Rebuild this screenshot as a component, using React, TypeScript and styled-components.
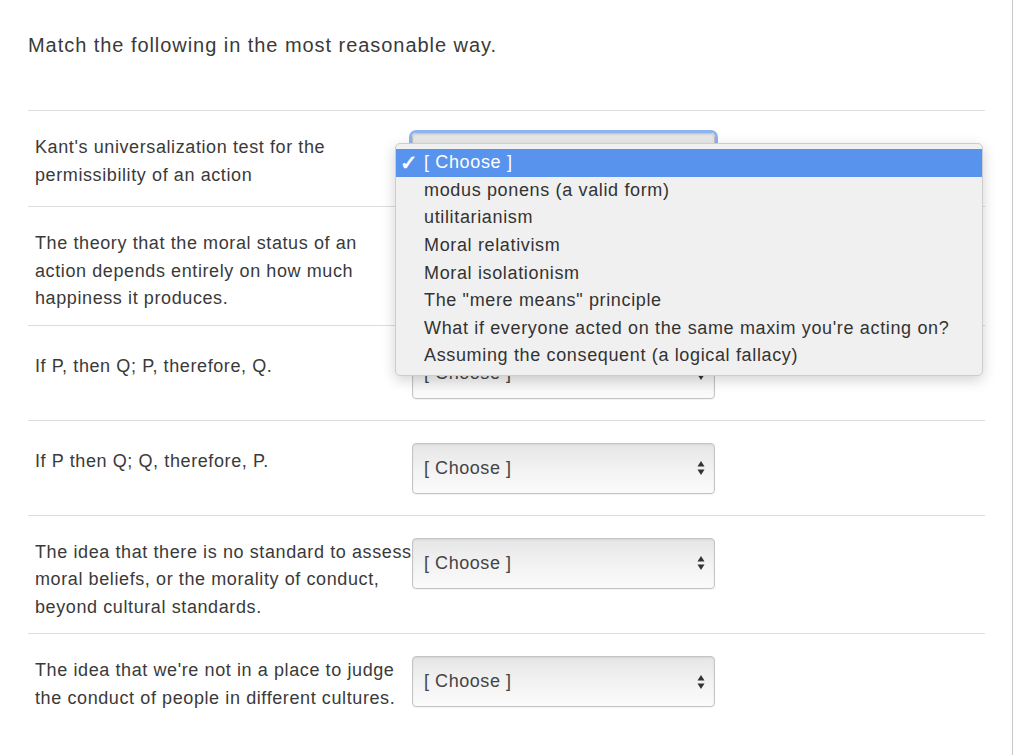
import styled, { createGlobalStyle } from "styled-components";

const GlobalStyle = createGlobalStyle`
  html, body {
    margin: 0;
    padding: 0;
    background: #fff;
  }
  body {
    font-family: "Liberation Sans", Arial, Helvetica, sans-serif;
    color: #3a3a3a;
  }
`;

const Page = styled.div`
  width: 1013px;
  min-height: 755px;
  box-sizing: border-box;
  border-right: 1px solid #c9c9c9;
  padding: 33px 0 0 28px;
`;

const Title = styled.h1`
  margin: 0;
  font-size: 20px;
  font-weight: normal;
  line-height: 24px;
  letter-spacing: 0.95px;
  color: #3a3a3a;
`;

const List = styled.div`
  width: 957px;
  margin-top: 53px;
  border-top: 1px solid #dcdcdc;
`;

const Row = styled.div<{ $last?: boolean }>`
  display: flex;
  align-items: flex-start;
  padding: 22px 0 12px 7px;
  border-bottom: ${(p) => (p.$last ? "none" : "1px solid #dcdcdc")};
`;

const Label = styled.div<{ $single?: boolean }>`
  width: 377px;
  flex: none;
  font-size: 18px;
  letter-spacing: 0.6px;
  line-height: 27.5px;
  padding-top: ${(p) => (p.$single ? "5px" : "1px")};
  color: #3a3a3a;
  white-space: nowrap;
`;

const SelectWrap = styled.div<{ $open?: boolean }>`
  position: relative;
  margin-bottom: ${(p) => (p.$open ? "10px" : "9px")};
`;

const SelectBox = styled.div<{ $focused?: boolean }>`
  width: 303px;
  height: 51px;
  box-sizing: border-box;
  border: 1px solid #c4c4c4;
  border-radius: 4px;
  background: linear-gradient(#e6e6e6, #f3f3f3 55%, #fbfbfb);
  box-shadow: ${(p) =>
    p.$focused
      ? "0 0 0 3px #8db4ef, inset 0 1px 2px rgba(0,0,0,0.08)"
      : "inset 0 1px 2px rgba(0,0,0,0.08), 0 1px 1px rgba(0,0,0,0.05)"};
  display: flex;
  align-items: center;
  justify-content: space-between;
  padding: 0 9px 0 11px;
  font-size: 18px;
  letter-spacing: 0.55px;
  color: #444;
`;

const Arrows = styled.svg`
  width: 8px;
  height: 16px;
  flex: none;
`;

const Menu = styled.div`
  position: absolute;
  left: -17px;
  top: 10px;
  width: 588px;
  box-sizing: border-box;
  padding: 5px 0;
  background: #f0f0f0;
  border: 1px solid #cdcdcd;
  border-radius: 5px;
  box-shadow: 0 4px 14px rgba(0, 0, 0, 0.18);
  z-index: 10;
`;

const Option = styled.div<{ $active?: boolean }>`
  display: flex;
  align-items: center;
  height: 27.6px;
  font-size: 18px;
  letter-spacing: 0.65px;
  color: ${(p) => (p.$active ? "#fff" : "#333")};
  background: ${(p) => (p.$active ? "#5893ee" : "transparent")};
`;

const Check = styled.span`
  width: 28px;
  padding-left: 4px;
  box-sizing: border-box;
  flex: none;
  font-size: 21px;
  font-weight: bold;
  letter-spacing: 0;
`;

const rows: { lines: string[]; single?: boolean }[] = [
  { lines: ["Kant's universalization test for the", "permissibility of an action"] },
  {
    lines: [
      "The theory that the moral status of an",
      "action depends entirely on how much",
      "happiness it produces.",
    ],
  },
  { lines: ["If P, then Q; P, therefore, Q."], single: true },
  { lines: ["If P then Q; Q, therefore, P."], single: true },
  {
    lines: [
      "The idea that there is no standard to assess",
      "moral beliefs, or the morality of conduct,",
      "beyond cultural standards.",
    ],
  },
  {
    lines: [
      "The idea that we're not in a place to judge",
      "the conduct of people in different cultures.",
    ],
  },
];

const options = [
  "[ Choose ]",
  "modus ponens (a valid form)",
  "utilitarianism",
  "Moral relativism",
  "Moral isolationism",
  'The "mere means" principle',
  "What if everyone acted on the same maxim you're acting on?",
  "Assuming the consequent (a logical fallacy)",
];

function UpDown() {
  return (
    <Arrows viewBox="0 0 8 16">
      <path d="M4 1 L7.5 6.5 L0.5 6.5 Z" fill="#333" />
      <path d="M4 15 L7.5 9.5 L0.5 9.5 Z" fill="#333" />
    </Arrows>
  );
}

export default function App() {
  return (
    <>
      <GlobalStyle />
      <Page>
        <Title>Match the following in the most reasonable way.</Title>
        <List>
          {rows.map((row, i) => (
            <Row key={i} $last={i === rows.length - 1}>
              <Label $single={row.single}>
                {row.lines.map((l, j) => (
                  <div key={j}>{l}</div>
                ))}
              </Label>
              <SelectWrap $open={i === 0}>
                <SelectBox $focused={i === 0}>
                  <span>[ Choose ]</span>
                  <UpDown />
                </SelectBox>
                {i === 0 && (
                  <Menu>
                    {options.map((o, k) => (
                      <Option key={k} $active={k === 0}>
                        <Check>{k === 0 ? "✓" : ""}</Check>
                        {o}
                      </Option>
                    ))}
                  </Menu>
                )}
              </SelectWrap>
            </Row>
          ))}
        </List>
      </Page>
    </>
  );
}
